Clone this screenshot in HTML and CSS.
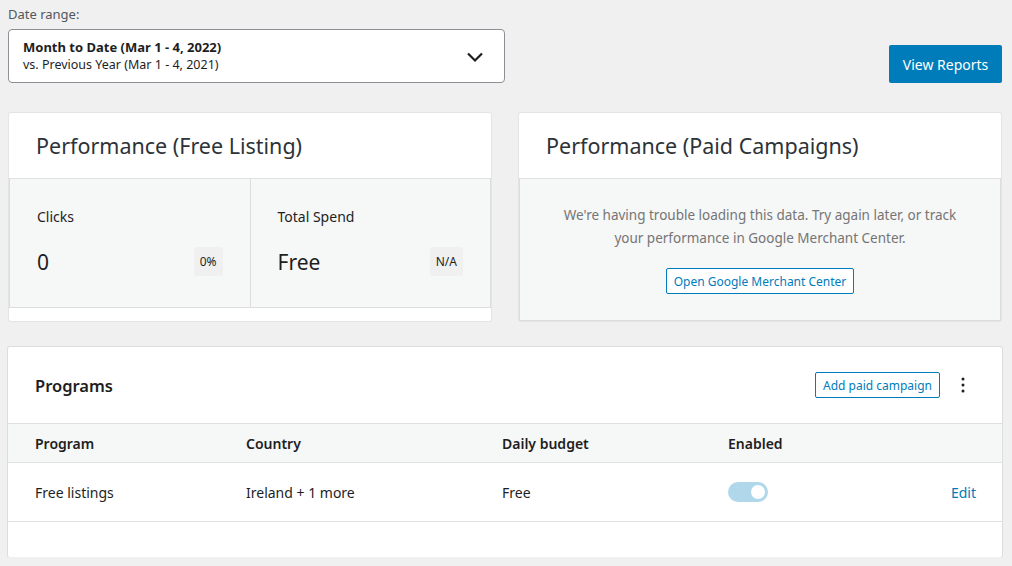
FILE: index.html
```html
<!DOCTYPE html>
<html>

<head>
    <meta name="viewport" content="width=device-width, initial-scale=1">
    <link rel="stylesheet" href="styles.css">
</head>

<body>
    <div class="top-bar">
        <div class="date-range">
            <label class="date-label">Date range:</label>
            <div class="date-select">
                <div class="date-text">
                    <b>Month to Date (Mar 1 - 4, 2022)</b>
                    <span>vs. Previous Year (Mar 1 - 4, 2021)</span>
                </div>
                <svg class="chevron" width="24" height="24" viewBox="0 0 24 24">
                    <path d="M5 9.5l7 7 7-7" fill="none" stroke="#1e1e1e" stroke-width="2.2"/>
                </svg>
            </div>
        </div>
        <button class="btn-primary">View Reports</button>
    </div>

    <div class="perf-row">
        <div class="card">
            <div class="card-header">Performance (Free Listing)</div>
            <div class="metrics">
                <div class="metric">
                    <div class="metric-label">Clicks</div>
                    <div class="metric-line">
                        <span class="metric-value">0</span>
                        <span class="delta">0%</span>
                    </div>
                </div>
                <div class="metric">
                    <div class="metric-label">Total Spend</div>
                    <div class="metric-line">
                        <span class="metric-value">Free</span>
                        <span class="delta">N/A</span>
                    </div>
                </div>
            </div>
            <div class="card-foot"></div>
        </div>

        <div class="card">
            <div class="card-header">Performance (Paid Campaigns)</div>
            <div class="card-error">
                <p>We're having trouble loading this data. Try again later, or track your performance in Google Merchant Center.</p>
                <button class="btn-outline">Open Google Merchant Center</button>
            </div>
        </div>
    </div>

    <div class="programs">
        <div class="programs-header">
            <h2>Programs</h2>
            <div class="programs-actions">
                <button class="btn-outline">Add paid campaign</button>
                <svg class="kebab" width="24" height="24" viewBox="0 0 24 24">
                    <circle cx="12" cy="4" r="2" fill="#1e1e1e"/>
                    <circle cx="12" cy="12" r="2" fill="#1e1e1e"/>
                    <circle cx="12" cy="20" r="2" fill="#1e1e1e"/>
                </svg>
            </div>
        </div>
        <div class="table-row table-head">
            <div>Program</div>
            <div>Country</div>
            <div>Daily budget</div>
            <div>Enabled</div>
            <div></div>
        </div>
        <div class="table-row">
            <div>Free listings</div>
            <div>Ireland + 1 more</div>
            <div>Free</div>
            <div><span class="toggle"><span class="knob"></span></span></div>
            <div class="edit"><a href="#">Edit</a></div>
        </div>
        <div class="table-foot"></div>
    </div>
</body>

</html>
```

FILE: styles.css
```css
body {
    margin: 0;
    padding: 0 10px 0 8px;
    background-color: #f0f0f0;
    font-family: "Noto Sans", "Open Sans", sans-serif;
    color: #1e1e1e;
}

.top-bar {
    display: flex;
    justify-content: space-between;
    align-items: flex-end;
    padding-top: 4px;
}

.date-label {
    display: block;
    font-size: 13px;
    color: #50575e;
    line-height: 20px;
    margin-bottom: 5px;
}

.date-select {
    width: 497px;
    height: 54px;
    box-sizing: border-box;
    background-color: #fff;
    border: 1px solid #8c8f94;
    border-radius: 4px;
    display: flex;
    align-items: center;
    justify-content: space-between;
    padding: 0 17px 0 14px;
}

.date-text b {
    display: block;
    font-size: 13px;
    line-height: 18px;
}

.date-text span {
    display: block;
    font-size: 12.5px;
    line-height: 18px;
}

.btn-primary {
    background-color: #007cba;
    color: #fff;
    border: none;
    border-radius: 2px;
    font-family: inherit;
    font-size: 14px;
    width: 113px;
    height: 38px;
    margin-bottom: 0;
}

.perf-row {
    display: flex;
    gap: 28px;
    margin-top: 30px;
    padding-left: 1px;
}

.card {
    width: 482px;
    background-color: #fff;
    border-radius: 2px;
    box-shadow: 0 0 0 1px #e4e4e4;
}

.card-header {
    height: 66px;
    box-sizing: border-box;
    padding: 0 27px;
    display: flex;
    align-items: center;
    font-size: 21.5px;
    color: #2c3338;
    border-bottom: 1px solid #e0e0e0;
}

.metrics {
    display: flex;
    background-color: #f6f7f7;
}

.metric {
    flex: 1;
    height: 129px;
    box-sizing: border-box;
    border: 1px solid #ddd;
    border-top: none;
    padding: 28px 27px 0 27px;
}

.metric + .metric {
    border-left: none;
}

.metric-label {
    font-size: 14px;
    line-height: 20px;
}

.metric-line {
    display: flex;
    justify-content: space-between;
    align-items: center;
    margin-top: 20px;
}

.metric-value {
    font-size: 21px;
}

.delta {
    background-color: #f0f0f0;
    font-size: 12px;
    padding: 0 6px;
    line-height: 29px;
    border-radius: 2px;
}

.card-foot {
    height: 13px;
}

.card-error {
    height: 142px;
    box-sizing: border-box;
    background-color: #f6f7f7;
    border: 1px solid #ddd;
    border-top: none;
    text-align: center;
    padding-top: 25px;
}

.card-error p {
    margin: 0 auto 18px auto;
    width: 420px;
    font-size: 13.5px;
    line-height: 23px;
    color: #757575;
}

.btn-outline {
    background-color: #fff;
    color: #007cba;
    border: 1px solid #007cba;
    border-radius: 2px;
    font-family: inherit;
    font-size: 12px;
    height: 26px;
    padding: 0 7px;
}

.programs {
    margin-top: 26px;
    background-color: #fff;
    border-radius: 2px;
    box-shadow: 0 0 0 1px #ddd;
}

.programs-header {
    height: 76px;
    display: flex;
    justify-content: space-between;
    align-items: center;
    padding: 0 27px 0 27px;
    border-bottom: 1px solid #e0e0e0;
}

.programs-header h2 {
    margin: 0;
    font-size: 16.5px;
    font-weight: 600;
}

.programs-actions {
    display: flex;
    align-items: center;
    gap: 11px;
}

.kebab {
    width: 24px;
    height: 18px;
}

.table-row {
    display: grid;
    grid-template-columns: 211px 256px 226px 1fr 60px;
    align-items: center;
    height: 58px;
    padding: 0 26px 0 27px;
    font-size: 14px;
    border-bottom: 1px solid #e0e0e0;
}

.table-head {
    height: 38px;
    background-color: #f6f7f7;
    font-weight: 600;
}

.toggle {
    display: block;
    width: 40px;
    height: 20px;
    border-radius: 10px;
    background-color: #b1d7ea;
    position: relative;
}

.knob {
    position: absolute;
    right: 3px;
    top: 3px;
    width: 14px;
    height: 14px;
    border-radius: 50%;
    background-color: #fff;
}

.edit {
    text-align: right;
}

.edit a {
    color: #007cba;
    text-decoration: none;
}

.table-foot {
    height: 35px;
}
```
